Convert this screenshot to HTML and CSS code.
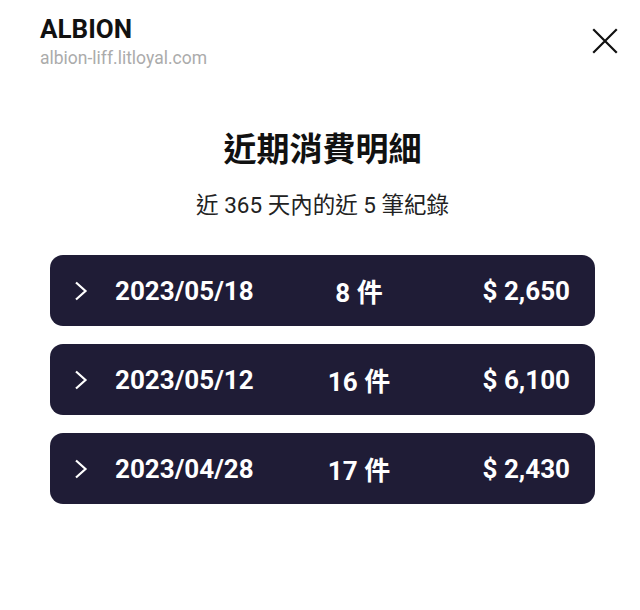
FILE: index.html
```html
<!DOCTYPE html>
<html lang="zh-Hant">
<head>
<meta charset="utf-8">
<title>ALBION</title>
<link rel="stylesheet" href="styles.css">
</head>
<body>
  <header class="topbar">
    <div class="brand">
      <div class="brand-name">ALBION</div>
      <div class="brand-host">albion-liff.litloyal.com</div>
    </div>
    <button class="close" aria-label="關閉">
      <svg width="26" height="26" viewBox="0 0 26 26"><path d="M2 2 L24 24 M24 2 L2 24" stroke="#111" stroke-width="2.2" fill="none" stroke-linecap="square"/></svg>
    </button>
  </header>

  <main class="content">
    <h1 class="title">近期消費明細</h1>
    <p class="subtitle">近 365 天內的近 5 筆紀錄</p>

    <ul class="orders">
      <li class="order">
        <svg class="chev" width="14" height="20" viewBox="0 0 14 20"><path d="M2 1.5 L11.5 10 L2 18.5" stroke="#fff" stroke-width="2.2" fill="none"/></svg>
        <span class="date">2023/05/18</span>
        <span class="count">8 件</span>
        <span class="amount">$ 2,650</span>
      </li>
      <li class="order">
        <svg class="chev" width="14" height="20" viewBox="0 0 14 20"><path d="M2 1.5 L11.5 10 L2 18.5" stroke="#fff" stroke-width="2.2" fill="none"/></svg>
        <span class="date">2023/05/12</span>
        <span class="count">16 件</span>
        <span class="amount">$ 6,100</span>
      </li>
      <li class="order">
        <svg class="chev" width="14" height="20" viewBox="0 0 14 20"><path d="M2 1.5 L11.5 10 L2 18.5" stroke="#fff" stroke-width="2.2" fill="none"/></svg>
        <span class="date">2023/04/28</span>
        <span class="count">17 件</span>
        <span class="amount">$ 2,430</span>
      </li>
    </ul>
  </main>
</body>
</html>
```

FILE: styles.css
```css
* { box-sizing: border-box; }

body {
  margin: 0;
  background: #fff;
  font-family: Roboto, "Noto Sans CJK TC", sans-serif;
  color: #111;
}

.topbar {
  display: flex;
  justify-content: space-between;
  align-items: flex-start;
  padding: 12px 22px 0 40px;
}

.brand-name {
  font-size: 26px;
  font-weight: 700;
  line-height: 34px;
  color: #111;
}

.brand-host {
  font-size: 17.5px;
  line-height: 24px;
  color: #ababab;
}

.close {
  border: 0;
  background: none;
  padding: 0;
  margin-top: 16px;
  width: 26px;
  height: 26px;
  cursor: pointer;
}

.content {
  padding: 0 45px 0 50px;
}

.title {
  margin: 54px 0 0;
  text-align: center;
  font-size: 33px;
  line-height: 46px;
  font-weight: 700;
  font-family: "Noto Sans CJK TC", sans-serif;
}

.subtitle {
  margin: 20px 0 0;
  text-align: center;
  font-size: 22.5px;
  line-height: 30px;
  color: #222;
}

.orders {
  list-style: none;
  margin: 35px 0 0;
  padding: 0;
  display: flex;
  flex-direction: column;
  gap: 18px;
}

.order {
  display: grid;
  grid-template-columns: 41px 194px 100px 1fr;
  align-items: center;
  height: 71px;
  padding: 0 25px 0 24px;
  background: #1f1c36;
  border-radius: 13px;
  color: #fff;
  font-size: 26px;
  font-weight: 700;
}

.chev { display: block; }

.count { text-align: center; }

.amount { text-align: right; }
```
